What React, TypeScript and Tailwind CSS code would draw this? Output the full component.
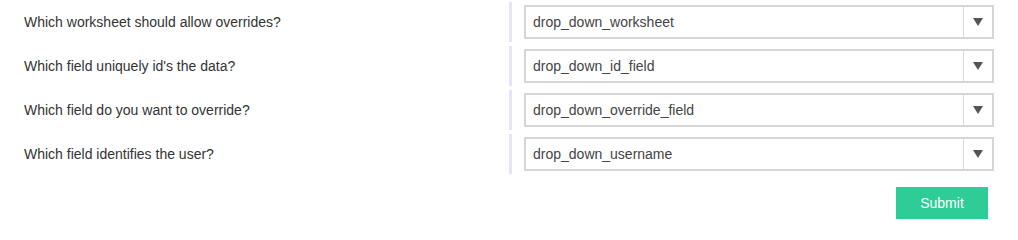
const rows = [
  { label: "Which worksheet should allow overrides?", value: "drop_down_worksheet" },
  { label: "Which field uniquely id's the data?", value: "drop_down_id_field" },
  { label: "Which field do you want to override?", value: "drop_down_override_field" },
  { label: "Which field identifies the user?", value: "drop_down_username" },
];

export default function App() {
  return (
    <div className="w-[1018px] h-[231px] bg-white font-['Liberation_Sans',Arial,sans-serif] text-[14px] text-[#333]">
      <div className="pt-[2px] flex flex-col gap-[4px]">
        {rows.map((row) => (
          <div key={row.value} className="grid grid-cols-2 h-[40px]">
            {/* Question */}
            <div className="flex items-center pl-[24px]">{row.label}</div>
            {/* Dropdown */}
            <div className="border-l-[3px] border-[#e4e4fa] pl-[12px] pr-[24px] pt-[3px]">
              <div className="flex h-[34px] border-2 border-[#d6d6d6] bg-white">
                <div className="flex-1 flex items-center pl-[7px] text-[#444]">{row.value}</div>
                <div className="w-[29px] border-l border-[#d6d6d6] flex items-center justify-center">
                  <svg width="10" height="8" viewBox="0 0 10 8">
                    <path d="M0 0H10L5 8Z" fill="#555" />
                  </svg>
                </div>
              </div>
            </div>
          </div>
        ))}
      </div>

      {/* Submit */}
      <div className="flex justify-end pr-[30px] mt-[13px]">
        <button className="w-[92px] h-[32px] bg-[#2ecc96] text-white text-[14px]">Submit</button>
      </div>
    </div>
  );
}
